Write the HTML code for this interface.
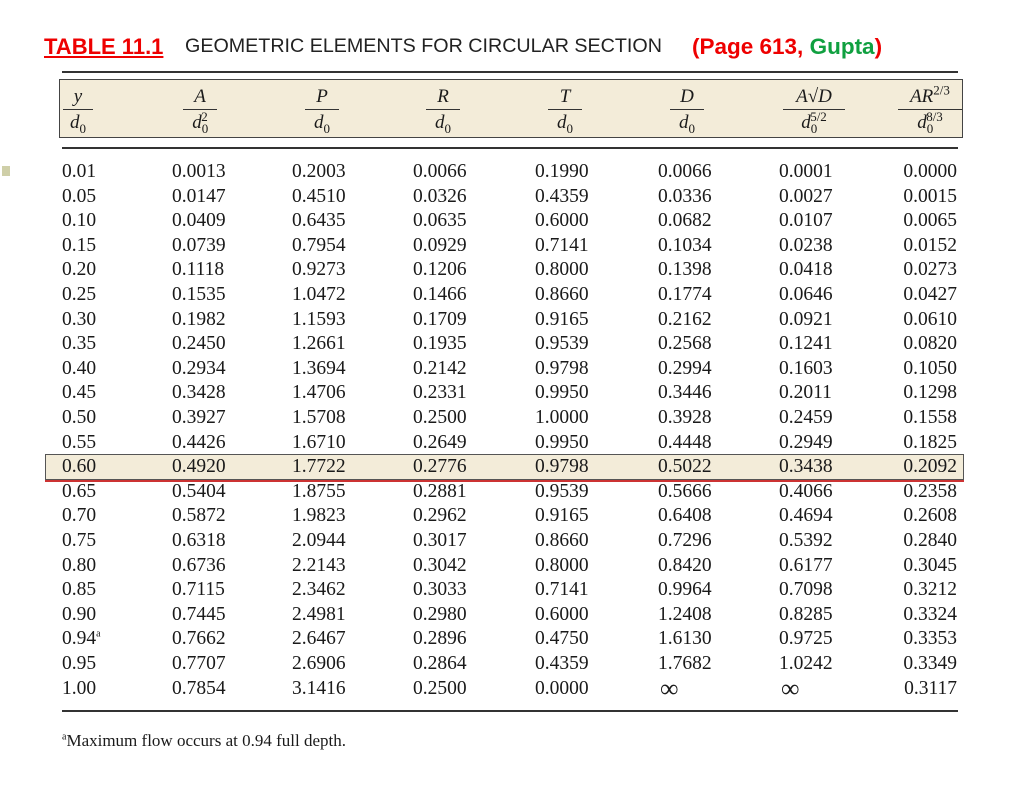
<!DOCTYPE html>
<html><head><meta charset="utf-8"><style>
body{margin:0;width:1024px;height:791px;background:#fff;position:relative;overflow:hidden;font-family:"Liberation Serif",serif;color:#1a1a1a}
.t{position:absolute;font-family:"Liberation Sans",sans-serif;}
.rule{position:absolute;background:#333;}
.row{position:absolute;left:62px;height:24.6px;line-height:24.6px;font-size:19.5px;display:flex;white-space:nowrap}
.row span{display:block;flex:none;box-sizing:border-box}
.c1{width:110px}.c2{width:120px}.c3{width:121px}.c4{width:122px}.c5{width:123px}.c6{width:121px}.c7{width:124px}.c8{width:54px;text-align:right}
.hdr{position:absolute;left:59px;top:79px;width:904px;height:59px;background:#f3ecd9;border:1.5px solid #444;box-sizing:border-box}
.fr{position:absolute;top:84px;font-style:italic;font-size:19px;text-align:center;line-height:25px}
.fr .n{border-bottom:1.5px solid #333;padding:0 2px}
.fr sup,.fr sub{font-size:13px;font-style:normal;line-height:0}
</style></head><body>
<div class="t" style="left:44px;top:34px;font-size:22px;font-weight:bold;color:#e00;text-decoration:underline">TABLE 11.1</div>
<div class="t" style="left:185px;top:35px;font-size:19.7px;color:#222">GEOMETRIC ELEMENTS FOR CIRCULAR SECTION</div>
<div class="t" style="left:692px;top:34px;font-size:22.5px;font-weight:bold;color:#e00">(Page 613, <span style="color:#10a040">Gupta</span>)</div>
<div class="rule" style="left:62px;top:71px;width:896px;height:2px"></div>
<div class="hdr"></div>
<div class="fr" style="left:63px;width:30px"><div class="n">y</div><div>d<sub>0</sub></div></div>
<div class="fr" style="left:183px;width:34px"><div class="n">A</div><div>d<sub>0</sub><sup style="margin-left:-7px">2</sup></div></div>
<div class="fr" style="left:305px;width:34px"><div class="n">P</div><div>d<sub>0</sub></div></div>
<div class="fr" style="left:426px;width:34px"><div class="n">R</div><div>d<sub>0</sub></div></div>
<div class="fr" style="left:548px;width:34px"><div class="n">T</div><div>d<sub>0</sub></div></div>
<div class="fr" style="left:670px;width:34px"><div class="n">D</div><div>d<sub>0</sub></div></div>
<div class="fr" style="left:783px;width:62px"><div class="n">A√D</div><div>d<sub>0</sub><sup style="margin-left:-7px">5/2</sup></div></div>
<div class="fr" style="left:898px;width:64px"><div class="n">AR<sup>2/3</sup></div><div>d<sub>0</sub><sup style="margin-left:-7px">8/3</sup></div></div>
<div class="rule" style="left:62px;top:147px;width:896px;height:2px"></div>
<div style="position:absolute;left:2px;top:166px;width:8px;height:10px;background:#cfcfa8"></div>
<div style="position:absolute;left:45px;top:454px;width:919px;height:26px;background:#f3ecd9;border:1.5px solid #555;box-sizing:border-box"></div>
<div style="position:absolute;left:45px;top:480px;width:919px;height:2px;background:#c33"></div>
<div class="row" style="top:160px"><span class="c1">0.01</span><span class="c2">0.0013</span><span class="c3">0.2003</span><span class="c4">0.0066</span><span class="c5">0.1990</span><span class="c6">0.0066</span><span class="c7">0.0001</span><span class="c8">0.0000</span></div>
<div class="row" style="top:184.6px"><span class="c1">0.05</span><span class="c2">0.0147</span><span class="c3">0.4510</span><span class="c4">0.0326</span><span class="c5">0.4359</span><span class="c6">0.0336</span><span class="c7">0.0027</span><span class="c8">0.0015</span></div>
<div class="row" style="top:209.2px"><span class="c1">0.10</span><span class="c2">0.0409</span><span class="c3">0.6435</span><span class="c4">0.0635</span><span class="c5">0.6000</span><span class="c6">0.0682</span><span class="c7">0.0107</span><span class="c8">0.0065</span></div>
<div class="row" style="top:233.8px"><span class="c1">0.15</span><span class="c2">0.0739</span><span class="c3">0.7954</span><span class="c4">0.0929</span><span class="c5">0.7141</span><span class="c6">0.1034</span><span class="c7">0.0238</span><span class="c8">0.0152</span></div>
<div class="row" style="top:258.4px"><span class="c1">0.20</span><span class="c2">0.1118</span><span class="c3">0.9273</span><span class="c4">0.1206</span><span class="c5">0.8000</span><span class="c6">0.1398</span><span class="c7">0.0418</span><span class="c8">0.0273</span></div>
<div class="row" style="top:283px"><span class="c1">0.25</span><span class="c2">0.1535</span><span class="c3">1.0472</span><span class="c4">0.1466</span><span class="c5">0.8660</span><span class="c6">0.1774</span><span class="c7">0.0646</span><span class="c8">0.0427</span></div>
<div class="row" style="top:307.6px"><span class="c1">0.30</span><span class="c2">0.1982</span><span class="c3">1.1593</span><span class="c4">0.1709</span><span class="c5">0.9165</span><span class="c6">0.2162</span><span class="c7">0.0921</span><span class="c8">0.0610</span></div>
<div class="row" style="top:332.2px"><span class="c1">0.35</span><span class="c2">0.2450</span><span class="c3">1.2661</span><span class="c4">0.1935</span><span class="c5">0.9539</span><span class="c6">0.2568</span><span class="c7">0.1241</span><span class="c8">0.0820</span></div>
<div class="row" style="top:356.8px"><span class="c1">0.40</span><span class="c2">0.2934</span><span class="c3">1.3694</span><span class="c4">0.2142</span><span class="c5">0.9798</span><span class="c6">0.2994</span><span class="c7">0.1603</span><span class="c8">0.1050</span></div>
<div class="row" style="top:381.4px"><span class="c1">0.45</span><span class="c2">0.3428</span><span class="c3">1.4706</span><span class="c4">0.2331</span><span class="c5">0.9950</span><span class="c6">0.3446</span><span class="c7">0.2011</span><span class="c8">0.1298</span></div>
<div class="row" style="top:406px"><span class="c1">0.50</span><span class="c2">0.3927</span><span class="c3">1.5708</span><span class="c4">0.2500</span><span class="c5">1.0000</span><span class="c6">0.3928</span><span class="c7">0.2459</span><span class="c8">0.1558</span></div>
<div class="row" style="top:430.6px"><span class="c1">0.55</span><span class="c2">0.4426</span><span class="c3">1.6710</span><span class="c4">0.2649</span><span class="c5">0.9950</span><span class="c6">0.4448</span><span class="c7">0.2949</span><span class="c8">0.1825</span></div>
<div class="row" style="top:455.2px"><span class="c1">0.60</span><span class="c2">0.4920</span><span class="c3">1.7722</span><span class="c4">0.2776</span><span class="c5">0.9798</span><span class="c6">0.5022</span><span class="c7">0.3438</span><span class="c8">0.2092</span></div>
<div class="row" style="top:479.8px"><span class="c1">0.65</span><span class="c2">0.5404</span><span class="c3">1.8755</span><span class="c4">0.2881</span><span class="c5">0.9539</span><span class="c6">0.5666</span><span class="c7">0.4066</span><span class="c8">0.2358</span></div>
<div class="row" style="top:504.4px"><span class="c1">0.70</span><span class="c2">0.5872</span><span class="c3">1.9823</span><span class="c4">0.2962</span><span class="c5">0.9165</span><span class="c6">0.6408</span><span class="c7">0.4694</span><span class="c8">0.2608</span></div>
<div class="row" style="top:529px"><span class="c1">0.75</span><span class="c2">0.6318</span><span class="c3">2.0944</span><span class="c4">0.3017</span><span class="c5">0.8660</span><span class="c6">0.7296</span><span class="c7">0.5392</span><span class="c8">0.2840</span></div>
<div class="row" style="top:553.6px"><span class="c1">0.80</span><span class="c2">0.6736</span><span class="c3">2.2143</span><span class="c4">0.3042</span><span class="c5">0.8000</span><span class="c6">0.8420</span><span class="c7">0.6177</span><span class="c8">0.3045</span></div>
<div class="row" style="top:578.2px"><span class="c1">0.85</span><span class="c2">0.7115</span><span class="c3">2.3462</span><span class="c4">0.3033</span><span class="c5">0.7141</span><span class="c6">0.9964</span><span class="c7">0.7098</span><span class="c8">0.3212</span></div>
<div class="row" style="top:602.8px"><span class="c1">0.90</span><span class="c2">0.7445</span><span class="c3">2.4981</span><span class="c4">0.2980</span><span class="c5">0.6000</span><span class="c6">1.2408</span><span class="c7">0.8285</span><span class="c8">0.3324</span></div>
<div class="row" style="top:627.4px"><span class="c1">0.94<sup style="font-size:10px;line-height:0">a</sup></span><span class="c2">0.7662</span><span class="c3">2.6467</span><span class="c4">0.2896</span><span class="c5">0.4750</span><span class="c6">1.6130</span><span class="c7">0.9725</span><span class="c8">0.3353</span></div>
<div class="row" style="top:652px"><span class="c1">0.95</span><span class="c2">0.7707</span><span class="c3">2.6906</span><span class="c4">0.2864</span><span class="c5">0.4359</span><span class="c6">1.7682</span><span class="c7">1.0242</span><span class="c8">0.3349</span></div>
<div class="row" style="top:676.6px"><span class="c1">1.00</span><span class="c2">0.7854</span><span class="c3">3.1416</span><span class="c4">0.2500</span><span class="c5">0.0000</span><span class="c6" style="font-size:26px;padding-left:2px">∞</span><span class="c7" style="font-size:26px;padding-left:2px">∞</span><span class="c8">0.3117</span></div>
<div class="rule" style="left:62px;top:710px;width:896px;height:2px"></div>
<div style="position:absolute;left:62px;top:731px;font-size:17px"><sup style="font-size:10px;line-height:0">a</sup>Maximum flow occurs at 0.94 full depth.</div>
</body></html>
